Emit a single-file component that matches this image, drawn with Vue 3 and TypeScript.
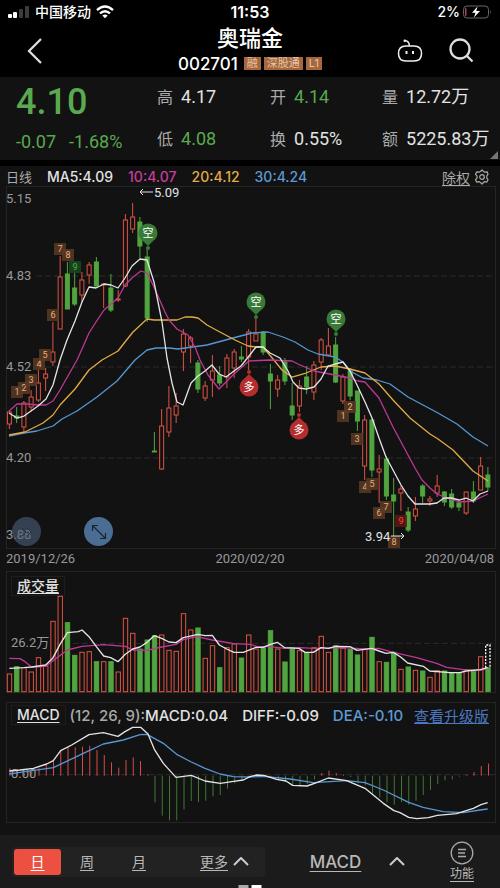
<script setup lang="ts">
type Tone = 'r' | 'g'
type Candle = [tone: Tone, high: number, top: number, bottom: number, low: number]

const quotes = [
  { label: '高', value: '4.17', down: false },
  { label: '开', value: '4.14', down: true },
  { label: '量', value: '12.72万', down: false },
  { label: '低', value: '4.08', down: true },
  { label: '换', value: '0.55%', down: false },
  { label: '额', value: '5225.83万', down: false },
]

const candles: Candle[] = [
  ['r', 410, 412, 424, 429], ['g', 407, 416, 418, 423], ['r', 401, 403, 427, 432], ['r', 390, 397, 407, 411],
  ['r', 370, 383, 400, 402], ['r', 368, 374, 378, 391], ['r', 322, 352, 362, 366], ['r', 256, 277, 329, 329],
  ['g', 262, 274, 309, 309], ['g', 272, 288, 304, 306], ['r', 272, 280, 295, 302], ['r', 262, 265, 275, 284],
  ['g', 257, 262, 286, 288], ['r', 283, 284, 285, 308], ['g', 274, 288, 310, 312], ['r', 290, 299, 300, 302],
  ['r', 214, 220, 286, 287], ['r', 203, 217, 229, 233], ['g', 217, 222, 246, 258], ['g', 247, 257, 318, 322],
  ['g', 432, 451, 452, 452], ['r', 409, 426, 469, 470], ['r', 386, 408, 432, 437], ['r', 393, 406, 415, 423],
  ['r', 329, 334, 352, 371], ['r', 336, 338, 346, 363], ['g', 360, 363, 389, 393], ['r', 381, 386, 398, 401],
  ['r', 355, 371, 380, 397], ['g', 366, 375, 383, 386], ['r', 354, 358, 377, 388], ['r', 349, 352, 368, 378],
  ['g', 346, 357, 359, 362], ['r', 329, 332, 357, 370], ['r', 319, 334, 341, 341], ['g', 331, 332, 352, 355],
  ['g', 364, 374, 381, 409], ['r', 375, 380, 389, 397], ['g', 358, 362, 381, 385], ['g', 383, 406, 415, 420],
  ['r', 380, 386, 406, 412], ['g', 366, 377, 387, 394], ['r', 361, 365, 392, 400], ['r', 338, 340, 362, 370],
  ['r', 328, 346, 355, 356], ['g', 337, 345, 382, 383], ['r', 374, 377, 401, 404], ['g', 368, 371, 396, 400],
  ['g', 391, 391, 421, 431], ['r', 415, 420, 466, 480], ['g', 419, 420, 470, 477], ['r', 455, 469, 472, 503],
  ['g', 456, 459, 496, 500], ['g', 478, 495, 501, 537], ['r', 486, 489, 493, 511], ['g', 507, 512, 530, 532],
  ['r', 497, 509, 516, 521], ['g', 484, 486, 496, 503], ['r', 496, 499, 501, 506], ['r', 475, 486, 493, 497],
  ['g', 491, 492, 502, 506], ['g', 489, 494, 507, 509], ['g', 501, 503, 507, 511], ['r', 492, 492, 513, 515],
  ['g', 481, 492, 501, 503], ['r', 457, 466, 490, 490], ['g', 467, 475, 487, 491],
]

const averages = [
  { tone: 'blue', points: '9,436 24,433 37,431 53,426 62,419 77,411 97,397 117,381 135,360 147,350 156,348 169,348 178,349 207,345 233,338 252,333 268,332 283,337 295,342 308,350 318,354 335,357 343,362 350,371 363,378 377,380 390,384 408,397 438,413 457,424 473,437 488,446' },
  { tone: 'gold', points: '9,435 25,432 43,423 53,415 60,405 75,389 89,370 102,360 118,351 125,342 133,332 147,319 154,320 177,320 185,317 192,317 198,318 207,325 218,331 235,340 248,346 256,347 263,347 273,359 282,370 292,377 306,373 321,367 335,366 350,369 365,373 379,384 393,400 410,418 430,434 438,439 453,450 473,471 488,481' },
  { tone: 'pink', points: '9,411 17,404 27,404 38,405 46,405 53,401 60,390 77,360 82,349 89,333 96,322 104,310 118,298 125,285 133,277 141,271 147,273 154,287 165,312 169,320 177,329 188,335 195,347 200,360 208,375 219,389 227,381 234,374 249,361 270,360 292,361 298,364 314,371 335,375 350,378 358,381 365,382 379,398 393,427 408,455 415,468 422,480 430,488 437,494 444,497 459,502 473,501 488,494' },
  { tone: 'white', points: '9,413 17,418 24,416 31,411 38,406 46,399 53,385 60,360 67,340 75,321 82,302 89,287 96,288 104,284 111,285 118,288 125,278 132,266 140,259 147,260 154,282 162,322 167,358 172,383 177,402 183,405 191,383 198,376 205,371 212,365 219,374 226,377 234,371 241,366 249,356 256,347 263,347 270,353 280,358 288,371 293,382 299,388 306,389 314,387 321,379 328,366 335,364 343,362 350,371 357,385 365,402 372,418 379,438 386,457 393,470 401,485 408,496 415,504 430,504 437,503 444,498 451,498 459,500 466,498 473,501 480,494 488,491' },
]

const tags = [
  [17, 392, 1], [24, 388, 2], [31, 380, 3], [39, 364, 4], [45, 355, 5], [53, 315, 6], [60, 249, 7], [68, 255, 8],
  [75, 267, 9, 'low'], [343, 416, 1], [350, 407, 2], [357, 439, 3], [365, 487, 4], [372, 484, 5], [379, 513, 6],
  [386, 507, 7], [394, 542, 8], [401, 521, 9, 'high'],
].map(([x, y, n, kind]) => ({ x: Number(x), y: Number(y), n, kind }))

const pins = [
  { x: 148, y: 233, text: '空', buy: false },
  { x: 256, y: 302, text: '空', buy: false },
  { x: 336, y: 319, text: '空', buy: false },
  { x: 249, y: 387, text: '多', buy: true },
  { x: 299, y: 430, text: '多', buy: true },
]

const candleX = (i: number) => 9.4 + 7.25 * i

// Volume and MACD plots use a grid three times finer than the price plot.
const barX = (i: number) => 28 + 21.75 * i
const volumeFloor = 380
const volumes = [
  'r327', 'g305', 'r308', 'r321', 'r278', 'r303', 'r169', 'r94', 'g173', 'g271', 'r262', 'r260', 'g290', 'r290',
  'g290', 'r321', 'r160', 'r205', 'g252', 'g225', 'g212', 'r210', 'r256', 'r259', 'r146', 'r195', 'g189', 'r280',
  'r242', 'g308', 'r248', 'r237', 'g279', 'r210', 'r252', 'g248', 'g197', 'r252', 'g291', 'g248', 'r257', 'g263',
  'r248', 'r214', 'r262', 'g242', 'r250', 'g254', 'g270', 'r252', 'g217', 'r290', 'g292', 'g262', 'r313', 'g306',
  'r316', 'g318', 'r337', 'r317', 'g318', 'g323', 'g323', 'r314', 'g320', 'r275', 'g308',
].map((s) => ({ tone: s[0], top: Number(s.slice(1)) }))

const volumeLines = [
  { tone: 'pink', points: '28,280 60,281 75,290 95,306 137,304 158,288 202,255 246,244 311,239 376,244 398,255 441,256 485,246 528,238 550,224 590,215 637,225 702,236 750,238 770,244 810,245 854,250 900,248 940,250 1030,248 1093,252 1137,250 1180,262 1250,278 1310,295 1340,307 1390,314 1441,316 1463,310' },
  { tone: 'white', points: '28,310 72,308 95,306 137,300 158,280 180,238 202,203 235,200 246,195 267,215 289,245 311,273 332,278 354,290 376,268 398,252 420,246 441,232 463,212 485,220 507,231 528,233 550,218 594,208 615,212 637,211 658,240 680,252 702,262 730,262 768,247 789,247 811,238 832,232 854,248 897,250 915,262 940,262 963,248 985,250 1007,244 1050,245 1071,256 1115,250 1137,258 1158,265 1180,262 1202,276 1223,294 1270,304 1289,318 1350,323 1380,323 1398,318 1441,314 1463,308' },
]

const macdZero = 227
const macd = [
  205, 213, 220, 215, 205, 192, 180, 150, 140, 142, 140, 137, 150, 165, 187, 203, 180, 172, 183, 223, 307, 347, 361,
  361, 328, 303, 306, 302, 289, 285, 266, 250, 240, 234, 229, 230, 232, 238, 246, 256, 256, 252, 238, 219, 212, 219,
  224, 231, 249, 256, 280, 292, 307, 314, 306, 314, 302, 285, 270, 252, 241, 238, 230, 224, 216, 198, 191,
]
const macdLines = [
  { tone: 'blue', points: '28,222 60,217 160,203 250,160 310,132 370,120 420,104 441,103 490,130 530,163 574,186 615,205 660,222 700,230 750,231 790,229 870,237 940,248 1040,242 1095,248 1150,270 1226,307 1269,322 1330,335 1390,338 1440,330 1463,327' },
  { tone: 'white', points: '28,213 60,210 100,205 140,192 160,182 182,152 215,135 267,104 310,98 354,109 375,95 398,82 422,82 444,102 463,148 490,190 528,232 574,226 615,243 661,250 700,244 730,240 750,230 770,225 792,226 830,238 858,243 878,256 921,258 950,248 985,234 1040,242 1095,265 1150,310 1182,332 1200,338 1226,352 1250,356 1285,353 1312,346 1370,341 1420,325 1443,314 1463,308' },
]
</script>

<template>
  <main class="app">
    <div class="status">
      <div class="carrier">
        <svg width="22" height="12" viewBox="0 0 22 12" aria-hidden="true">
          <rect x="0" y="8" width="4" height="4" rx="1" fill="#fff" />
          <rect x="5" y="6" width="4" height="6" rx="1" fill="#fff" />
          <rect x="11" y="3" width="4" height="9" rx="1" fill="#3c3c3c" />
          <rect x="17" y="0" width="4" height="12" rx="1" fill="#3c3c3c" />
        </svg>
        <span>中国移动</span>
        <svg width="18" height="14" viewBox="0 0 18 14" fill="none" stroke="#fff" stroke-width="2.4" aria-hidden="true">
          <path d="M1 5.2Q9-2 17 5.2M4 8.4Q9 4 14 8.4" />
          <path d="M9 13.2 6.3 10.4Q9 8.4 11.7 10.4Z" fill="#fff" stroke="none" />
        </svg>
      </div>
      <b class="clock">11:53</b>
      <div class="battery">
        <span>2%</span>
        <svg width="29" height="14" viewBox="0 0 29 14" aria-hidden="true">
          <rect x="0.5" y="1" width="25" height="12" rx="3.5" fill="none" stroke="#666" />
          <path d="M27.3 5v4q1.5-2 0-4z" fill="#777" />
          <rect x="2" y="3" width="1.5" height="8" rx=".7" fill="#a34754" />
          <path d="M14.5 1.5 9 7.8h3.5L11 12.5l6-6.5h-3.7z" fill="#fff" />
        </svg>
      </div>
    </div>

    <header class="nav">
      <button class="icon back" aria-label="返回">
        <svg width="16" height="26" viewBox="0 0 16 26" fill="none" stroke="#ddd" stroke-width="2.3"><path d="M15 1 3 13l12 12" /></svg>
      </button>
      <div class="title">
        <h1>奥瑞金</h1>
        <div class="code"><span>002701</span><i>融</i><i>深股通</i><i>L1</i></div>
      </div>
      <div class="tools">
        <button class="icon" aria-label="助手">
          <svg width="26" height="24" viewBox="0 0 26 24" fill="none" stroke="#eee" stroke-width="1.5">
            <path d="M7.5 1.5Q12 1.5 12.5 7M9 7h8q7.5 0 7.5 7.5T17 22H9q-7.5 0-7.5-7.5T9 7z" />
            <circle cx="7.8" cy="1.8" r="1.3" fill="#eee" stroke="none" />
            <path d="M9.5 12v3M16 12v3" stroke-width="2" />
          </svg>
        </button>
        <button class="icon" aria-label="搜索">
          <svg width="25" height="25" viewBox="0 0 25 25" fill="none" stroke="#ddd" stroke-width="2.3"><circle cx="11" cy="11" r="9.5" /><path d="m17.5 17.5 6 6" /></svg>
        </button>
      </div>
    </header>

    <section class="quote">
      <div class="price">4.10</div>
      <div class="change"><span>-0.07</span><span>-1.68%</span></div>
      <dl class="facts">
        <div v-for="q in quotes" :key="q.label"><dt>{{ q.label }}</dt><dd :class="{ down: q.down }">{{ q.value }}</dd></div>
      </dl>
    </section>

    <section class="charts">
      <div class="legend">
        <span class="period">日线</span><span>MA5:4.09</span><span class="pink">10:4.07</span>
        <span class="gold">20:4.12</span><span class="blue">30:4.24</span>
        <div class="adjust">
          <button class="link">除权</button>
          <button class="icon" aria-label="设置">
            <svg width="16" height="16" viewBox="0 0 16 16" fill="none" stroke="#aaa" stroke-width="1.2" stroke-linejoin="round">
              <path d="m6.3 2.6 1.7-1.6 1.7 1.6 1 .6 2.6-.4.7 2.5-1.2 1.6v2.2l1.2 1.6-1.3 2.4-2.5-.4L9.5 13.5 8 15l-1.6-1.6-1.2-.7-2.4.4L1.5 10.7 3 9.1V6.9L1.5 5.3l1.3-2.5 2.5.4z" /><circle cx="8" cy="8" r="2.3" />
            </svg>
          </button>
        </div>
      </div>

      <div class="frame">
        <svg class="plot" viewBox="7 187 488 361" role="img" aria-label="日线图">
          <path class="grid" d="M36 276H495M36 367H495M36 458H495" />
          <text class="axis" x="6" y="203">5.15</text>
          <text class="axis" x="6" y="280">4.83</text>
          <text class="axis" x="6" y="371">4.52</text>
          <text class="axis" x="6" y="462">4.20</text>
          <text class="axis" x="6" y="539">3.88</text>
          <g v-for="(c, i) in candles" :key="i" :class="c[0]">
            <path v-if="c[0] === 'g'" :d="`M${candleX(i)} ${c[1]}V${c[4]}`" />
            <path v-else :d="`M${candleX(i)} ${c[1]}V${c[2]}M${candleX(i)} ${c[3]}V${c[4]}`" />
            <rect :x="candleX(i) - 2" :y="c[2]" width="4" :height="c[3] - c[2]" />
          </g>
          <polyline v-for="l in averages" :key="l.tone" class="line" :class="l.tone" :points="l.points" />
          <g v-for="(t, i) in tags" :key="i" class="tag" :class="t.kind">
            <rect :x="t.x - 6" :y="t.y - 6" width="12" height="12" />
            <text :x="t.x" :y="t.y + 3">{{ t.n }}</text>
          </g>
          <g v-for="(p, i) in pins" :key="i" class="pin" :class="{ buy: p.buy }">
            <path v-if="p.buy" :d="`M${p.x - 5} ${p.y - 8}L${p.x} ${p.y - 13}L${p.x + 5} ${p.y - 8}Z`" />
            <path v-else :d="`M${p.x - 5} ${p.y + 8}L${p.x} ${p.y + 13}L${p.x + 5} ${p.y + 8}Z`" />
            <circle :cx="p.x" :cy="p.y" r="9.5" />
            <circle :cx="p.x" :cy="p.buy ? p.y - 15 : p.y + 15" r="2" />
            <text :x="p.x" :y="p.y + 4">{{ p.text }}</text>
          </g>
          <path class="arrow" d="M153 192H140M143 189l-3 3 3 3M391 536h13M401 533l3 3-3 3" />
          <text class="mark" x="154" y="197">5.09</text>
          <text class="mark" x="365" y="541">3.94</text>
        </svg>
        <button class="round faded" aria-label="前进">
          <svg width="14" height="14" viewBox="0 0 14 14" fill="none" stroke="#243140"><path d="m2 3 4 4-4 4M7 3l4 4-4 4" /></svg>
        </button>
        <button class="round expand" aria-label="全屏">
          <svg width="16" height="16" viewBox="0 0 16 16" fill="none" stroke="#152536" stroke-width="1.2"><path d="m1.5 1.5 13 13M1.5 7V1.5H7M14.5 9v5.5H9" /></svg>
        </button>
      </div>
      <div class="dates"><span>2019/12/26</span><span>2020/02/20</span><span>2020/04/08</span></div>

      <div class="frame volume">
        <div class="heading"><button class="link chip">成交量</button></div>
        <svg class="plot" viewBox="21 90 1464 291" role="img" aria-label="成交量图">
          <path class="grid fine" d="M165 235H1485" />
          <text class="axis fine" x="33" y="247">26.2万</text>
          <g v-for="(v, i) in volumes" :key="i" class="fine" :class="v.tone">
            <rect :x="barX(i) - 6" :y="v.top" width="13" :height="volumeFloor - v.top" />
          </g>
          <path class="forecast" d="M1457 308V240H1470V308" />
          <polyline v-for="l in volumeLines" :key="l.tone" class="line fine" :class="l.tone" :points="l.points" />
        </svg>
      </div>

      <div class="frame macd">
        <div class="heading">
          <button class="link chip">MACD</button>
          <span class="values"><span class="dim">(12, 26, 9):</span>MACD:0.04</span>
          <span class="diff">DIFF:-0.09</span>
          <span class="blue">DEA:-0.10</span>
          <a class="upgrade" href="#upgrade">查看升级版</a>
        </div>
        <svg class="plot" viewBox="21 81 1464 285" role="img" aria-label="MACD 图">
          <path class="grid fine" d="M120 224H1485" />
          <text class="axis fine" x="33" y="233">0.00</text>
          <path v-for="(m, i) in macd" :key="i" class="stick" :class="m < macdZero ? 'up' : 'dn'" :d="`M${barX(i) + 2} ${macdZero}V${m}`" />
          <polyline v-for="l in macdLines" :key="l.tone" class="line fine" :class="l.tone" :points="l.points" />
        </svg>
      </div>
    </section>

    <nav class="toolbar">
      <div class="periods">
        <button class="active"><u>日</u></button>
        <button><u>周</u></button>
        <button><u>月</u></button>
        <button class="more"><u>更多</u><svg width="16" height="9" viewBox="0 0 16 9" fill="none" stroke="#ccc" stroke-width="2"><path d="m1 8 7-7 7 7" /></svg></button>
      </div>
      <button class="indicator"><u>MACD</u><svg width="16" height="9" viewBox="0 0 16 9" fill="none" stroke="#ccc" stroke-width="2"><path d="m1 8 7-7 7 7" /></svg></button>
      <button class="feature">
        <svg width="24" height="24" viewBox="0 0 24 24" fill="none" stroke="#aaa" stroke-width="1.3"><circle cx="12" cy="12" r="10.8" /><path d="M8 8.5h8M8 12h7M8 15.5h8" /></svg>
        <u>功能</u>
      </button>
      <div class="pager"><span></span><span></span></div>
    </nav>
  </main>
</template>

<style>
body {
  background: #000;
}
</style>

<style scoped>
.app {
  color: #e2e2e2;
  background: #000;
  font-family: Inter, "Noto Sans CJK SC", sans-serif;
  font-size: 14px;
}
button {
  padding: 0;
  border: 0;
  background: none;
  color: inherit;
  font: inherit;
}
svg {
  flex: none;
}
.icon {
  display: flex;
}
.status {
  display: grid;
  grid-template-columns: 1fr auto 1fr;
  align-items: center;
  height: 24px;
  padding: 0 8px;
  color: #fff;
  font-weight: 500;
  line-height: 20px;
}
.carrier,
.battery {
  display: flex;
  align-items: center;
  gap: 5px;
}
.battery {
  justify-content: flex-end;
  gap: 3px;
}
.clock {
  font-size: 16px;
  font-weight: 600;
}
.nav {
  display: grid;
  grid-template-columns: 1fr auto 1fr;
  align-items: center;
  height: 53px;
  padding: 0 26px;
}
.title {
  text-align: center;
}
h1 {
  margin: 0;
  color: #fff;
  font-size: 22px;
  font-weight: 500;
  line-height: 26px;
}
.code {
  display: flex;
  align-items: center;
  gap: 3px;
  color: #fff;
  font-size: 17px;
  font-weight: 500;
  line-height: 26px;
}
.code span {
  margin-right: 3px;
}
.code i {
  padding: 0 3px;
  background: #a5683e;
  color: #e9c3a2;
  font-size: 11px;
  font-style: normal;
  font-weight: 400;
  line-height: 13px;
}
.tools {
  display: flex;
  justify-content: flex-end;
  align-items: center;
  gap: 26px;
}
.quote {
  position: relative;
  display: grid;
  grid-template-columns: 141fr 343fr;
  grid-template-rows: 42px 41px;
  align-items: center;
  padding-left: 16px;
  background: #121212;
  font-family: Roboto, "Noto Sans CJK SC", sans-serif;
  font-size: 18px;
}
.quote::after {
  content: "";
  position: absolute;
  right: 2px;
  bottom: 1px;
  border-left: 8px solid transparent;
  border-bottom: 8px solid #777;
}
.price {
  padding-top: 8px;
  color: #5aa94f;
  font-size: 36px;
  font-weight: 500;
  line-height: 34px;
}
.change {
  display: flex;
  gap: 13px;
  grid-row: 2;
  grid-column: 1;
  padding-top: 4px;
  color: #5aa94f;
  font-size: 18px;
  line-height: 18px;
}
.facts {
  display: grid;
  grid-template-columns: 113fr 112fr 118fr;
  grid-template-rows: 42px 41px;
  grid-column: 2;
  grid-row: 1 / 3;
  align-items: baseline;
  margin: 0;
  line-height: 40px;
}
.facts div {
  display: flex;
  align-items: baseline;
  gap: 8px;
}
dt {
  color: #aaa;
  font-size: 16px;
}
dd {
  margin: 0;
}
dd.down {
  color: #5aa94f;
}
.charts {
  margin-top: 6px;
  padding: 1px 4px 12px 6px;
  background: #121212;
}
.legend {
  display: flex;
  align-items: center;
  gap: 15px;
  height: 19px;
  font-weight: 500;
}
.period,
.adjust {
  color: #aaa;
  font-size: 13px;
  font-weight: 400;
}
.adjust {
  display: flex;
  gap: 4px;
  align-items: center;
  margin-left: auto;
  padding-right: 6px;
  font-size: 14px;
}
.link {
  text-decoration: underline;
  text-underline-offset: 2px;
}
span.pink {
  color: #c83c9b;
}
span.gold {
  color: #e2ab45;
}
span.blue {
  color: #5a9bd5;
}
.frame {
  position: relative;
  border: 1px solid #242424;
}
.plot {
  display: block;
  width: 100%;
  height: auto;
  overflow: visible;
  font-family: Roboto, "Noto Sans CJK SC", sans-serif;
}
.grid {
  fill: none;
  stroke: #2b2b2b;
  stroke-dasharray: 6 3;
}
.grid.fine {
  stroke-width: 3;
  stroke-dasharray: 18 9;
}
.axis {
  fill: #999;
  font-size: 13px;
}
.axis.fine {
  font-size: 39px;
}
.r {
  fill: none;
  stroke: #dd5544;
}
.r rect {
  fill: #121212;
}
.g {
  fill: #50a53f;
  stroke: #50a53f;
}
.r.fine,
.g.fine {
  stroke-width: 3;
}
.line {
  fill: none;
  stroke-width: 1.3;
  stroke-linejoin: round;
}
.line.fine {
  stroke-width: 4;
}
.line.white {
  stroke: #e4e4e4;
}
.line.pink {
  stroke: #bd3994;
}
.line.gold {
  stroke: #e2ab45;
}
.line.blue {
  stroke: #5696d2;
}
.tag rect {
  fill: #5b3a25;
  fill-opacity: 0.85;
}
.tag text {
  fill: #eeb077;
  font-size: 9px;
  text-anchor: middle;
}
.tag.low rect {
  fill: #174a1c;
}
.tag.low text {
  fill: #4eb54c;
}
.tag.high rect {
  fill: #651513;
}
.tag.high text {
  fill: #f04b32;
}
.pin {
  fill: #397a38;
}
.pin.buy {
  fill: #b52d2d;
}
.pin text {
  fill: #fff;
  font-size: 11px;
  text-anchor: middle;
}
.arrow {
  fill: none;
  stroke: #e2e2e2;
}
.mark {
  fill: #e2e2e2;
  font-size: 13px;
}
.round {
  position: absolute;
  bottom: 2px;
  display: grid;
  place-items: center;
  width: 29px;
  height: 29px;
  border-radius: 50%;
}
.faded {
  left: 5px;
  background: rgb(76 96 122 / 60%);
}
.expand {
  left: 77px;
  background: #4b6d91;
}
.dates {
  display: flex;
  justify-content: space-between;
  height: 22px;
  padding-right: 2px;
  color: #999;
  font-family: Roboto, sans-serif;
  font-size: 13px;
  line-height: 20px;
}
.heading {
  display: flex;
  align-items: center;
  height: 24px;
  padding: 0 6px 0 4px;
  font-size: 15px;
  font-weight: 500;
}
.volume .heading {
  height: 23px;
  padding-top: 2px;
  margin-bottom: -2px;
}
.chip {
  padding: 0 5px;
  border: 1px solid #1e1e1e;
  font-size: 14px;
  line-height: 18px;
}
.forecast {
  fill: none;
  stroke: #fff;
  stroke-width: 4;
  stroke-dasharray: 6 4;
}
.macd {
  margin-top: 9px;
}
.values {
  margin-left: 4px;
}
.diff {
  margin: 0 14px;
}
.dim {
  color: #aaa;
}
.upgrade {
  margin-left: auto;
  color: #4b78c0;
  font-weight: 400;
}
.stick {
  stroke-width: 3;
}
.up {
  stroke: #d64a4a;
}
.dn {
  stroke: #3f7a30;
}
.toolbar {
  position: relative;
  display: flex;
  justify-content: space-between;
  align-items: center;
  height: 53px;
  padding: 0 26px 0 12px;
  background: #1b1b1b;
  color: #b8b8b8;
}
.toolbar u {
  text-underline-offset: 3px;
}
.periods {
  display: flex;
  align-items: center;
  height: 30px;
  padding: 0 2px;
  border-radius: 3px;
  background: #222;
}
.periods button {
  width: 52px;
  line-height: 26px;
}
.periods .active {
  width: 47px;
  border-radius: 3px;
  background: #ec5040;
  color: #fff;
}
.periods .more {
  display: flex;
  align-items: center;
  justify-content: flex-end;
  gap: 5px;
  width: 98px;
  padding-right: 14px;
}
.indicator {
  display: flex;
  align-items: center;
  gap: 28px;
  font-size: 17px;
  font-weight: 500;
}
.feature {
  display: grid;
  justify-items: center;
  font-size: 12px;
  line-height: 18px;
}
.pager {
  position: absolute;
  bottom: 0;
  left: 50%;
  display: flex;
  gap: 3px;
  transform: translateX(-50%);
}
.pager span {
  width: 10px;
  height: 3px;
  background: #aaa;
}
.pager span + span {
  background: #fff;
}
</style>
